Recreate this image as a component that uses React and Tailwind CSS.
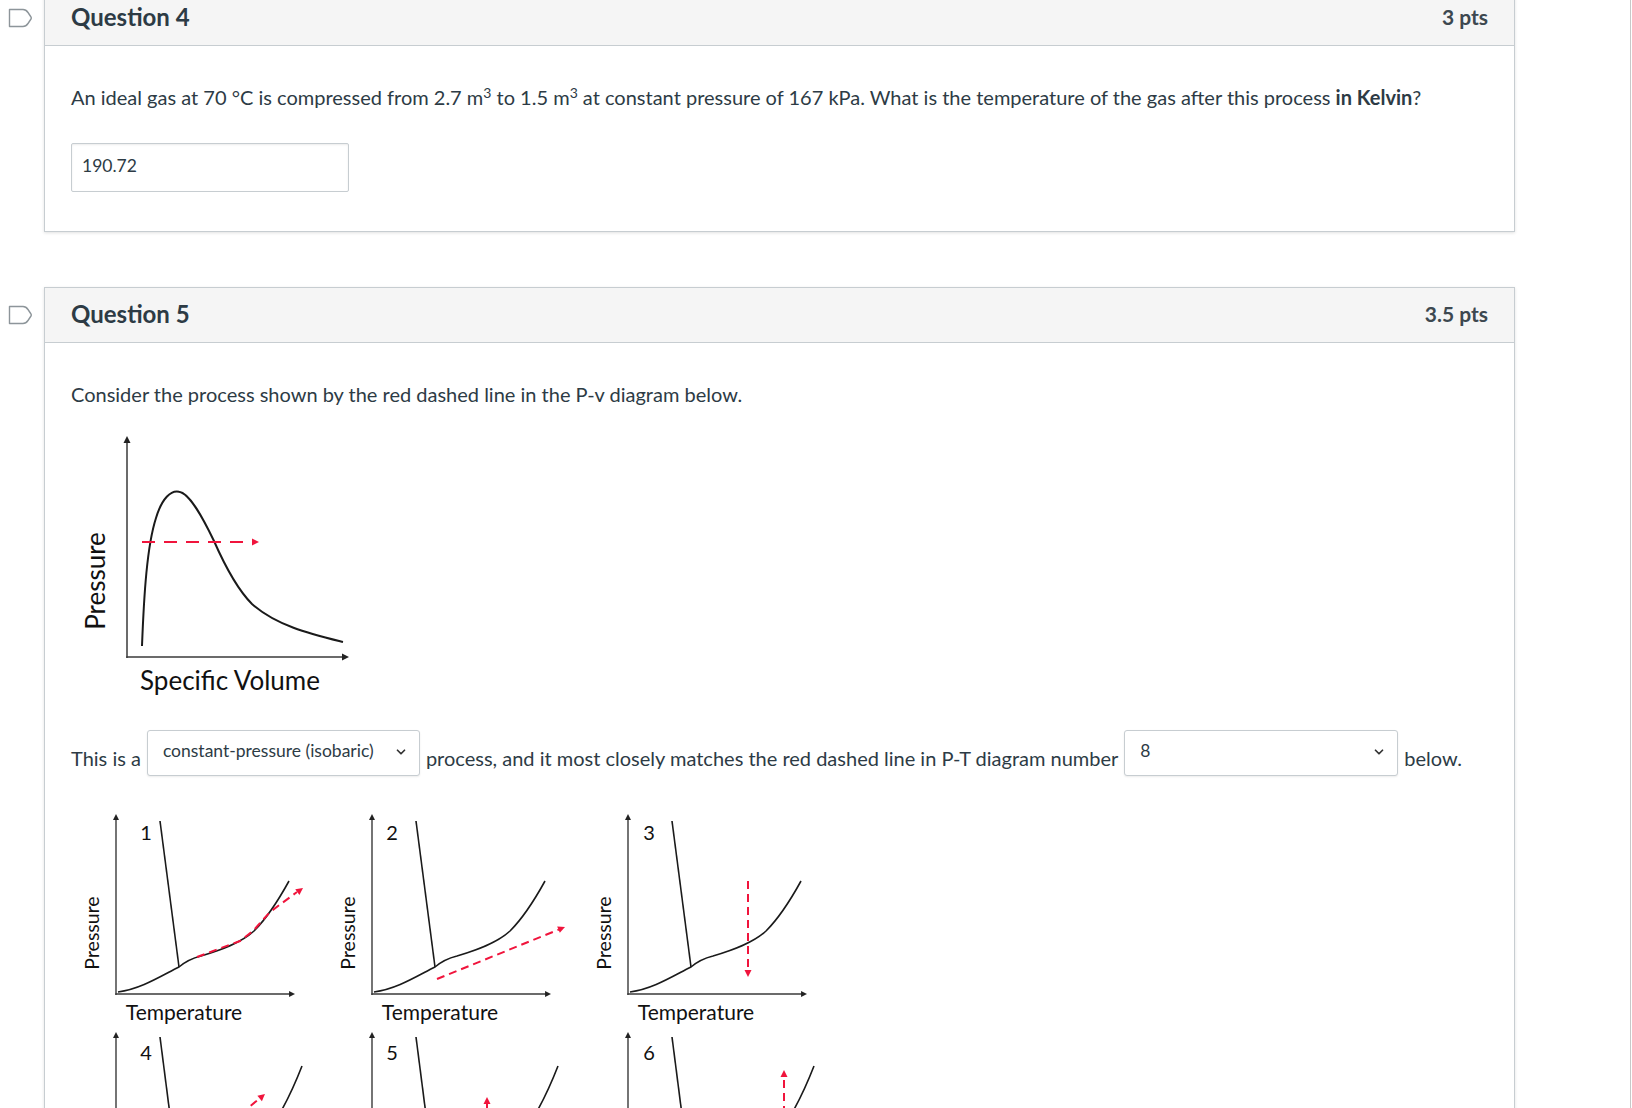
import React from "react";
import { ChevronDown } from "lucide-react";

const RED = "#f0143c";
const INK = "#1a1a1a";
const AX = "#3a3a3a";

function DragIcon() {
  return (
    <svg width="25" height="20" viewBox="0 0 25 20" fill="none">
      <path
        d="M1.5 1.5 H15 Q18 1.5 20 4.5 L23 9 Q23.7 10 23 11 L20 15.5 Q18 18.5 15 18.5 H1.5 Z"
        stroke="#8d959a"
        strokeWidth="1.4"
        strokeLinejoin="round"
      />
    </svg>
  );
}

function Arrow({ x, y, a, color = RED, s = 1 }) {
  return (
    <polygon
      points={`0,0 ${-7 * s},${-3.5 * s} ${-7 * s},${3.5 * s}`}
      transform={`translate(${x} ${y}) rotate(${a})`}
      fill={color}
    />
  );
}

function Question({ title, pts, children, top }) {
  return (
    <div className={top ? "flex -mt-[10px]" : "flex mt-[55px]"}>
      <div className="w-[44px] shrink-0 pl-[8px] pt-[18px]">
        <DragIcon />
      </div>
      <div className="w-[1471px] border border-[#c7cdd1] bg-white shadow-[0_1px_3px_rgba(0,0,0,0.12)]">
        <div className="h-[55px] bg-[#f5f5f5] border-b border-[#c7cdd1] px-[26px] pb-[3px] flex items-center justify-between text-[#2d3b45]">
          <div className="text-[24px] font-bold">{title}</div>
          <div className="text-[21px] font-bold text-[#3d4850]">{pts}</div>
        </div>
        {children}
      </div>
    </div>
  );
}

function PvDiagram() {
  return (
    <svg width="290" height="272" viewBox="0 0 290 272" style={{ fontFamily: "Lato, 'Open Sans', sans-serif" }}>
      <line x1="56" y1="234" x2="56" y2="18" stroke={AX} strokeWidth="1.5" />
      <Arrow x={56} y={12} a={-90} color="#222" />
      <line x1="55.25" y1="233" x2="272" y2="233" stroke={AX} strokeWidth="1.5" />
      <Arrow x={278} y={233} a={0} color="#222" />
      <path
        d="M71 222 C73 170 76 122 85 94 C91 74 100 66 108 67.7 C118 69 130 90 143 117 C154 142 166 165 181 180 C206 202 240 210 272 218"
        stroke={INK}
        strokeWidth="2"
        fill="none"
      />
      <line x1="71" y1="118" x2="182" y2="118" stroke={RED} strokeWidth="2" strokeDasharray="13 9" />
      <Arrow x={188} y={118} a={0} />
      <text
        x="24"
        y="157"
        transform="rotate(-90 24 157)"
        textAnchor="middle"
        dominantBaseline="central"
        fontSize="26"
        fill="#111"
      >
        Pressure
      </text>
      <text x="159" y="256" textAnchor="middle" dominantBaseline="central" fontSize="26" fill="#111">
        Specific Volume
      </text>
    </svg>
  );
}

function PtDiagram({ n, labelX, row2, children }) {
  const curve = row2
    ? "M47 181 C70 178 90 165 108 156 C118 150 128 146 138 142 C160 134 180 124 195 105 C210 86 222 60 231 37"
    : "M47 181 C70 178 90 165 108 156 C115 150 122 147 130 145 C150 139 170 132 183 120 C195 108 207 90 218 70";
  return (
    <svg width="256" height="218" viewBox="0 0 256 218" style={{ fontFamily: "Lato, 'Open Sans', sans-serif" }}>
      <line x1="45" y1="184" x2="45" y2="8" stroke={AX} strokeWidth="1.4" />
      <Arrow x={45} y={3} a={-90} color="#222" s={0.85} />
      <line x1="44.3" y1="183" x2="219" y2="183" stroke={AX} strokeWidth="1.4" />
      <Arrow x={224} y={183} a={0} color="#222" s={0.85} />
      <line x1="89" y1={row2 ? 8 : 10} x2="108" y2="156" stroke={INK} strokeWidth="1.6" />
      <path d={curve} stroke={INK} strokeWidth="1.6" fill="none" />
      {children}
      <text x={labelX} y={row2 ? 23 : 21} textAnchor="middle" dominantBaseline="central" fontSize="20" fill="#111">
        {n}
      </text>
      <text
        x="20"
        y="122"
        transform="rotate(-90 20 122)"
        textAnchor="middle"
        dominantBaseline="central"
        fontSize="19.5"
        fill="#111"
      >
        Pressure
      </text>
      <text x="113" y="200" textAnchor="middle" dominantBaseline="central" fontSize="21" fill="#111">
        Temperature
      </text>
    </svg>
  );
}

const dash = { stroke: RED, strokeWidth: 2, strokeDasharray: "8 5", fill: "none" };

function Select({ value, width }) {
  return (
    <div
      className={
        "h-[46px] shrink-0 border border-[#c7cdd1] rounded-[3px] bg-white shadow-[0_1px_2px_rgba(0,0,0,0.08)] flex items-center justify-between pl-[15px] pr-[11px] pb-[5px] text-[17.5px] text-[#2d3b45] " +
        width
      }
    >
      <span>{value}</span>
      <ChevronDown size={14} strokeWidth={3} className="text-[#333] mt-[3px]" />
    </div>
  );
}

export default function App() {
  return (
    <div className="w-[1631px] h-[1108px] overflow-hidden bg-white border-r border-[#c8c8c8] font-[Lato,'Open_Sans',sans-serif] text-[#2d3b45]">
      <Question top title="Question 4" pts="3 pts">
        <div className="px-[26px] pt-[37px] pb-[39px]">
          <p className="text-[20px] leading-[28px]">
            An ideal gas at 70 °C is compressed from 2.7 m<sup className="text-[14px]">3</sup> to 1.5 m
            <sup className="text-[14px]">3</sup> at constant pressure of 167 kPa. What is the temperature of the gas
            after this process <b>in Kelvin</b>?
          </p>
          <div className="mt-[32px] w-[278px] h-[49px] border border-[#c7cdd1] rounded-[2px] shadow-[inset_0_1px_2px_rgba(0,0,0,0.08)] flex items-center pl-[10px] pb-[3px] text-[17.5px]">
            190.72
          </div>
        </div>
      </Question>

      <Question title="Question 5" pts="3.5 pts">
        <div className="px-[26px] pt-[37px]">
          <p className="text-[20px] leading-[28px]">
            Consider the process shown by the red dashed line in the P-v diagram below.
          </p>
          <div className="mt-[16px]">
            <PvDiagram />
          </div>
          <div className="mt-[34px] flex items-center gap-[6px] text-[20px] leading-[28px] whitespace-nowrap">
            <span className="pt-[10px]">This is a</span>
            <Select value="constant-pressure (isobaric)" width="w-[273px]" />
            <span className="pt-[10px]">process, and it most closely matches the red dashed line in P-T diagram number</span>
            <Select value="8" width="w-[274px]" />
            <span className="pt-[10px]">below.</span>
          </div>
          <div className="mt-[35px] grid grid-cols-[256px_256px_256px]">
            <PtDiagram n="1" labelX={75}>
              <polyline points="126,146 169,130 182,120 199,101 226,81" style={dash} />
              <Arrow x={232} y={77} a={-36} />
            </PtDiagram>
            <PtDiagram n="2" labelX={65}>
              <line x1="110" y1="168" x2="232" y2="118.5" style={dash} />
              <Arrow x={238} y={116} a={-22} />
            </PtDiagram>
            <PtDiagram n="3" labelX={66}>
              <line x1="165" y1="70" x2="165" y2="160" style={dash} />
              <Arrow x={165} y={166} a={90} />
            </PtDiagram>
            <PtDiagram n="4" labelX={75} row2>
              <line x1="120" y1="127" x2="189" y2="69" style={dash} />
              <Arrow x={194} y={65} a={-40} />
            </PtDiagram>
            <PtDiagram n="5" labelX={65} row2>
              <line x1="160" y1="160" x2="160" y2="74" style={dash} />
              <Arrow x={160} y={68} a={-90} />
            </PtDiagram>
            <PtDiagram n="6" labelX={66} row2>
              <line x1="201" y1="150" x2="201" y2="47" style={dash} />
              <Arrow x={201} y={41} a={-90} />
            </PtDiagram>
          </div>
        </div>
      </Question>
    </div>
  );
}
